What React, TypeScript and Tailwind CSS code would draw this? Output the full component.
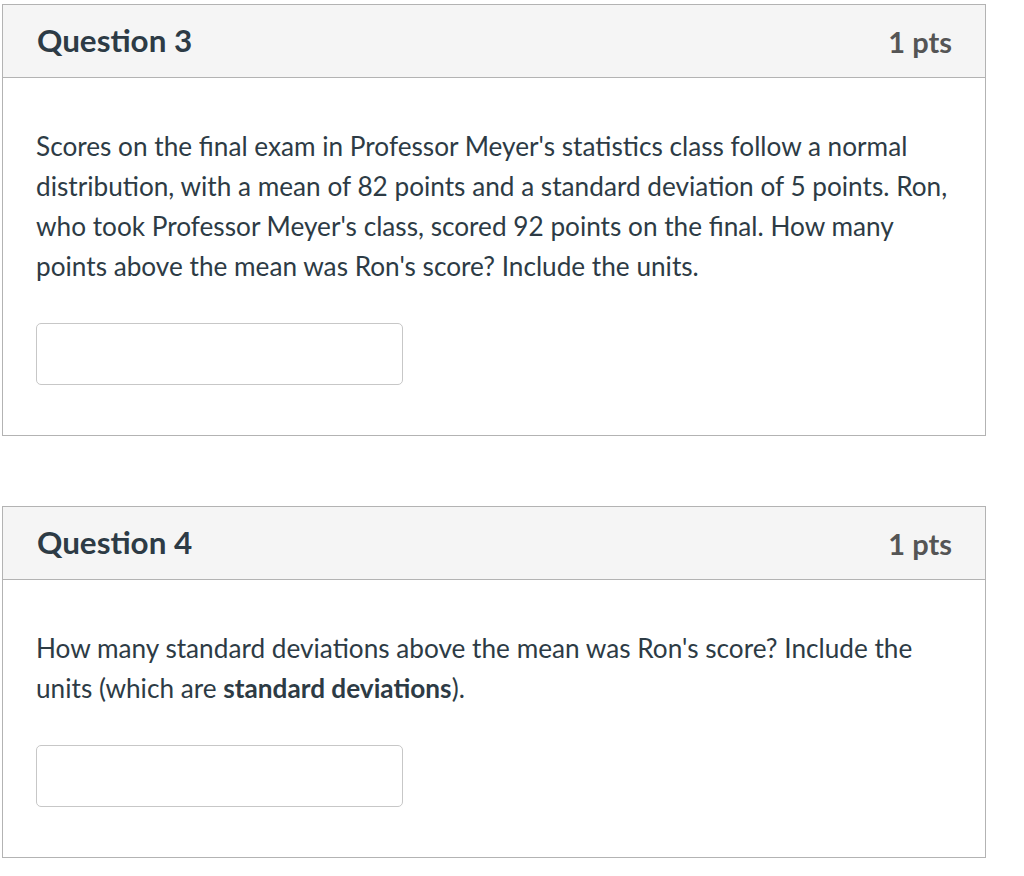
const font = { fontFamily: 'Lato, "Open Sans", sans-serif' };

interface QuestionProps {
  title: string;
  points: string;
  children: React.ReactNode;
  className?: string;
}

function Question({ title, points, children, className = '' }: QuestionProps) {
  return (
    <div className={`w-[984px] border border-[#b3b3b3] bg-white ${className}`}>
      <div className="h-[73px] flex items-center justify-between pl-[34px] pr-[33px] bg-[#f5f5f5] border-b border-[#b3b3b3]">
        <h2 className="text-[31.4px] font-bold text-[#2d3b45] leading-none">{title}</h2>
        <div className="text-[29px] font-bold text-[#555555] leading-none">{points}</div>
      </div>
      <div className="pl-[33px] pr-[22px] pt-[48px] pb-[50px]">
        <p className="text-[26.2px] leading-[40px] text-[#2d3b45]">{children}</p>
        <input
          type="text"
          className="mt-[37px] block w-[367px] h-[62px] rounded-[5px] border border-[#c7c7c7] bg-white"
        />
      </div>
    </div>
  );
}

export default function App() {
  return (
    <div className="min-h-screen bg-white pt-[4px] pl-[2px]" style={font}>
      <Question title="Question 3" points="1 pts">
        Scores on the final exam in Professor Meyer's statistics class follow a normal distribution, with a mean of 82
        points and a standard deviation of 5 points. Ron, who took Professor Meyer's class, scored 92 points on the
        final. How many points above the mean was Ron's score? Include the units.
      </Question>
      <Question title="Question 4" points="1 pts" className="mt-[70px]">
        How many standard deviations above the mean was Ron's score? Include the units (which are{' '}
        <strong className="font-bold">standard deviations</strong>).
      </Question>
    </div>
  );
}
